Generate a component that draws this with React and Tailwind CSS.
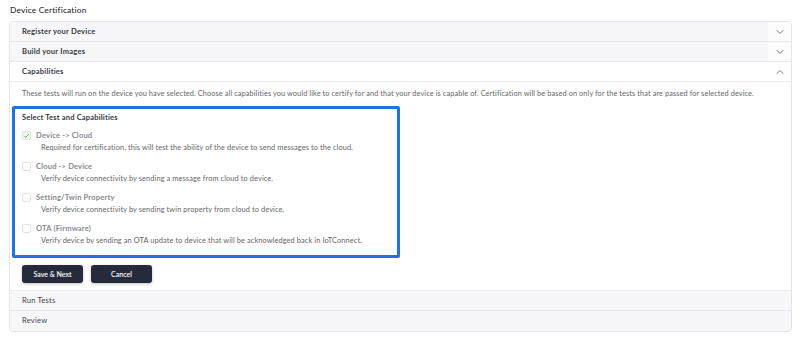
import { ChevronDown, ChevronUp, Check } from 'lucide-react'

const CAPS = [
  { label: 'Device -> Cloud', desc: 'Required for certification, this will test the ability of the device to send messages to the cloud.', checked: true },
  { label: 'Cloud -> Device', desc: 'Verify device connectivity by sending a message from cloud to device.' },
  { label: 'Setting/Twin Property', desc: 'Verify device connectivity by sending twin property from cloud to device.' },
  { label: 'OTA (Firmware)', desc: 'Verify device by sending an OTA update to device that will be acknowledged back in IoTConnect.' },
]

function CollapsedRow({ title, chevron = true, last = false, bold = true }) {
  return (
    <div className={`flex h-[20px] bg-[#f7f7fa] ${last ? '' : 'border-b border-[#e9e9ee]'}`}>
      <div className={`flex-1 flex items-center pl-[12px] text-[7.6px] ${bold ? 'font-bold text-[#3a3a44]' : 'font-normal text-[#44444c]'} tracking-[0.2px]`}>{title}</div>
      {chevron && (
        <div className="w-[23px] flex items-center justify-center bg-[#fcfcfd]">
          <ChevronDown size={12} strokeWidth={1.8} className="text-[#6a6a70]" />
        </div>
      )}
    </div>
  )
}

export default function App() {
  return (
    <div className="w-[800px] h-[351px] bg-white font-['Lato',sans-serif] text-[#333]">
      <div className="h-[21px] flex items-center pl-[10px] text-[8.3px] font-medium text-[#2a2a33] tracking-[0.2px]">
        Device Certification
      </div>
      <div className="ml-[9px] w-[783px] border border-[#e4e4ea] rounded-[4px] overflow-hidden">
        <CollapsedRow title="Register your Device" />
        <CollapsedRow title="Build your Images" />
        {/* Capabilities (open) */}
        <div className="flex h-[20px] bg-white border-b border-[#ececf0]">
          <div className="flex-1 flex items-center pl-[12px] text-[7.6px] font-bold text-[#3a3a44] tracking-[0.2px]">Capabilities</div>
          <div className="w-[23px] flex items-center justify-center">
            <ChevronUp size={12} strokeWidth={1.8} className="text-[#6a6a70]" />
          </div>
        </div>
        <div className="bg-white pb-[7px] border-b border-[#ececf0]">
          <div className="h-[24px] flex items-center pl-[12px] text-[7.35px] text-[#666] tracking-[0.1px] whitespace-nowrap">
            These tests will run on the device you have selected. Choose all capabilities you would like to certify for and that your device is capable of. Certification will be based on only for the tests that are passed for selected device.
          </div>
          <div className="ml-[2px] w-[388px] border-[3px] border-[#1a73e8] rounded-[2px] pl-[7px] pt-[2px] pb-[8px]">
            <div className="h-[13px] flex items-center text-[7.6px] font-bold text-[#3a3a44] tracking-[0.15px]">Select Test and Capabilities</div>
            <div className="flex flex-col gap-[6px] mt-[5px]">
              {CAPS.map(c => (
                <div key={c.label}>
                  <div className="flex items-center h-[13px]">
                    <span className={`w-[9px] h-[9px] border border-[#e2e2e6] rounded-[2px] flex items-center justify-center ${c.checked ? 'bg-[#f1f9f1]' : 'bg-white'}`}>
                      {c.checked && <Check size={8} strokeWidth={3} className="text-[#4caf50]" />}
                    </span>
                    <span className="ml-[5px] text-[7.6px] font-bold text-[#8a8a90] tracking-[0.15px]">{c.label}</span>
                  </div>
                  <div className="h-[12px] flex items-center pl-[19px] text-[7.4px] text-[#666] tracking-[0.1px] whitespace-nowrap">{c.desc}</div>
                </div>
              ))}
            </div>
          </div>
          <div className="flex gap-[8px] pl-[12px] mt-[7px]">
            <button className="w-[61px] h-[18px] rounded-[3px] bg-[#262b3b] text-white text-[7px] font-semibold shadow-[0_1px_3px_rgba(0,0,0,0.25)]">Save &amp; Next</button>
            <button className="w-[61px] h-[18px] rounded-[3px] bg-[#262b3b] text-white text-[7px] font-semibold shadow-[0_1px_3px_rgba(0,0,0,0.25)]">Cancel</button>
          </div>
        </div>
        <CollapsedRow title="Run Tests" chevron={false} bold={false} />
        <CollapsedRow title="Review" chevron={false} bold={false} last />
      </div>
    </div>
  )
}
